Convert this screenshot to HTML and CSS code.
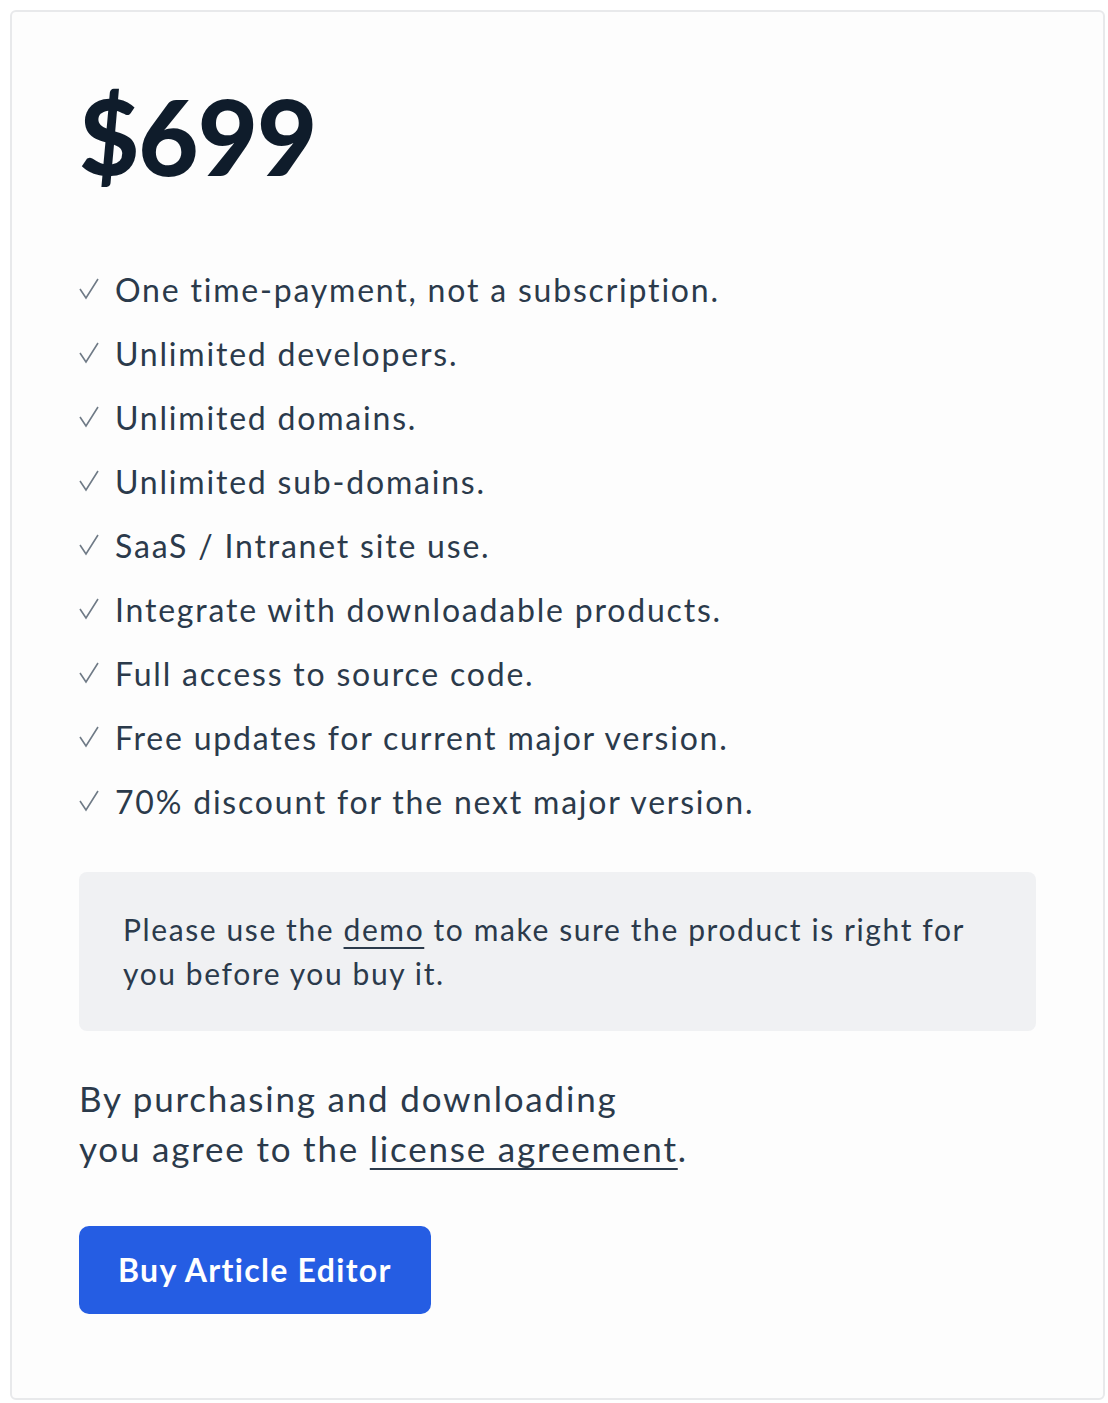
FILE: index.html
```html
<!DOCTYPE html>
<html lang="en">
  <head>
    <meta charset="UTF-8" />
    <meta name="viewport" content="width=device-width, initial-scale=1.0" />
    <title>Article Editor — Pricing</title>
    <link rel="stylesheet" href="styles.css">
  </head>
  <body>
    <div class="card">
      <h1 class="price">$699</h1>
      <ul class="features">
        <li><svg class="check" viewBox="0 0 20 22"><polyline points="1,11 7,20 19,1" /></svg>One time-payment, not a subscription.</li>
        <li><svg class="check" viewBox="0 0 20 22"><polyline points="1,11 7,20 19,1" /></svg>Unlimited developers.</li>
        <li><svg class="check" viewBox="0 0 20 22"><polyline points="1,11 7,20 19,1" /></svg>Unlimited domains.</li>
        <li><svg class="check" viewBox="0 0 20 22"><polyline points="1,11 7,20 19,1" /></svg>Unlimited sub-domains.</li>
        <li><svg class="check" viewBox="0 0 20 22"><polyline points="1,11 7,20 19,1" /></svg>SaaS / Intranet site use.</li>
        <li><svg class="check" viewBox="0 0 20 22"><polyline points="1,11 7,20 19,1" /></svg>Integrate with downloadable products.</li>
        <li><svg class="check" viewBox="0 0 20 22"><polyline points="1,11 7,20 19,1" /></svg>Full access to source code.</li>
        <li><svg class="check" viewBox="0 0 20 22"><polyline points="1,11 7,20 19,1" /></svg>Free updates for current major version.</li>
        <li><svg class="check" viewBox="0 0 20 22"><polyline points="1,11 7,20 19,1" /></svg>70% discount for the next major version.</li>
      </ul>
      <div class="note">
        Please use the <a href="#demo">demo</a> to make sure the product is right for
        you before you buy it.
      </div>
      <p class="terms">
        By purchasing and downloading<br />
        you agree to the <a href="#license">license agreement</a>.
      </p>
      <a class="buy" href="#buy">Buy Article Editor</a>
    </div>
  </body>
</html>
```

FILE: styles.css
```css
* {
  margin: 0;
  padding: 0;
  box-sizing: border-box;
}

body {
  font-family: Lato, "Noto Sans", sans-serif;
  color: #2b3a4b;
  background: #fff;
  padding: 10px 3px 3px 10px;
}

.card {
  border: 2px solid #e8e9eb;
  border-radius: 6px;
  background: #fdfdfd;
  padding: 72px 67px 84px 67px;
  min-height: 1390px;
}

.price {
  font-size: 104px;
  line-height: 1;
  font-weight: 900;
  color: #0f1c2b;
  letter-spacing: -1px;
}

.features {
  list-style: none;
  margin-top: 70px;
}

.features li {
  display: flex;
  align-items: center;
  font-size: 32px;
  line-height: 64px;
  letter-spacing: 1.8px;
  color: #2b3a4b;
}

.check {
  width: 20px;
  height: 22px;
  margin-right: 16px;
  flex-shrink: 0;
  position: relative;
  top: -1px;
}

.check polyline {
  fill: none;
  stroke: #6f7a86;
  stroke-width: 1.6;
}

.note {
  margin-top: 38px;
  background: #f0f1f3;
  border-radius: 8px;
  padding: 35px 44px 36px 44px;
  font-size: 30px;
  line-height: 44px;
  letter-spacing: 1.6px;
}

.note a,
.terms a {
  color: inherit;
  text-decoration: underline;
  text-decoration-thickness: 2px;
  text-underline-offset: 6px;
}

.terms {
  margin-top: 42px;
  font-size: 35px;
  line-height: 50px;
  letter-spacing: 1.8px;
}

.buy {
  display: inline-block;
  margin-top: 53px;
  background: #255de3;
  color: #fff;
  font-weight: bold;
  font-size: 32px;
  line-height: 88px;
  letter-spacing: 1.3px;
  padding: 0 39px;
  border-radius: 10px;
  text-decoration: none;
}
```
